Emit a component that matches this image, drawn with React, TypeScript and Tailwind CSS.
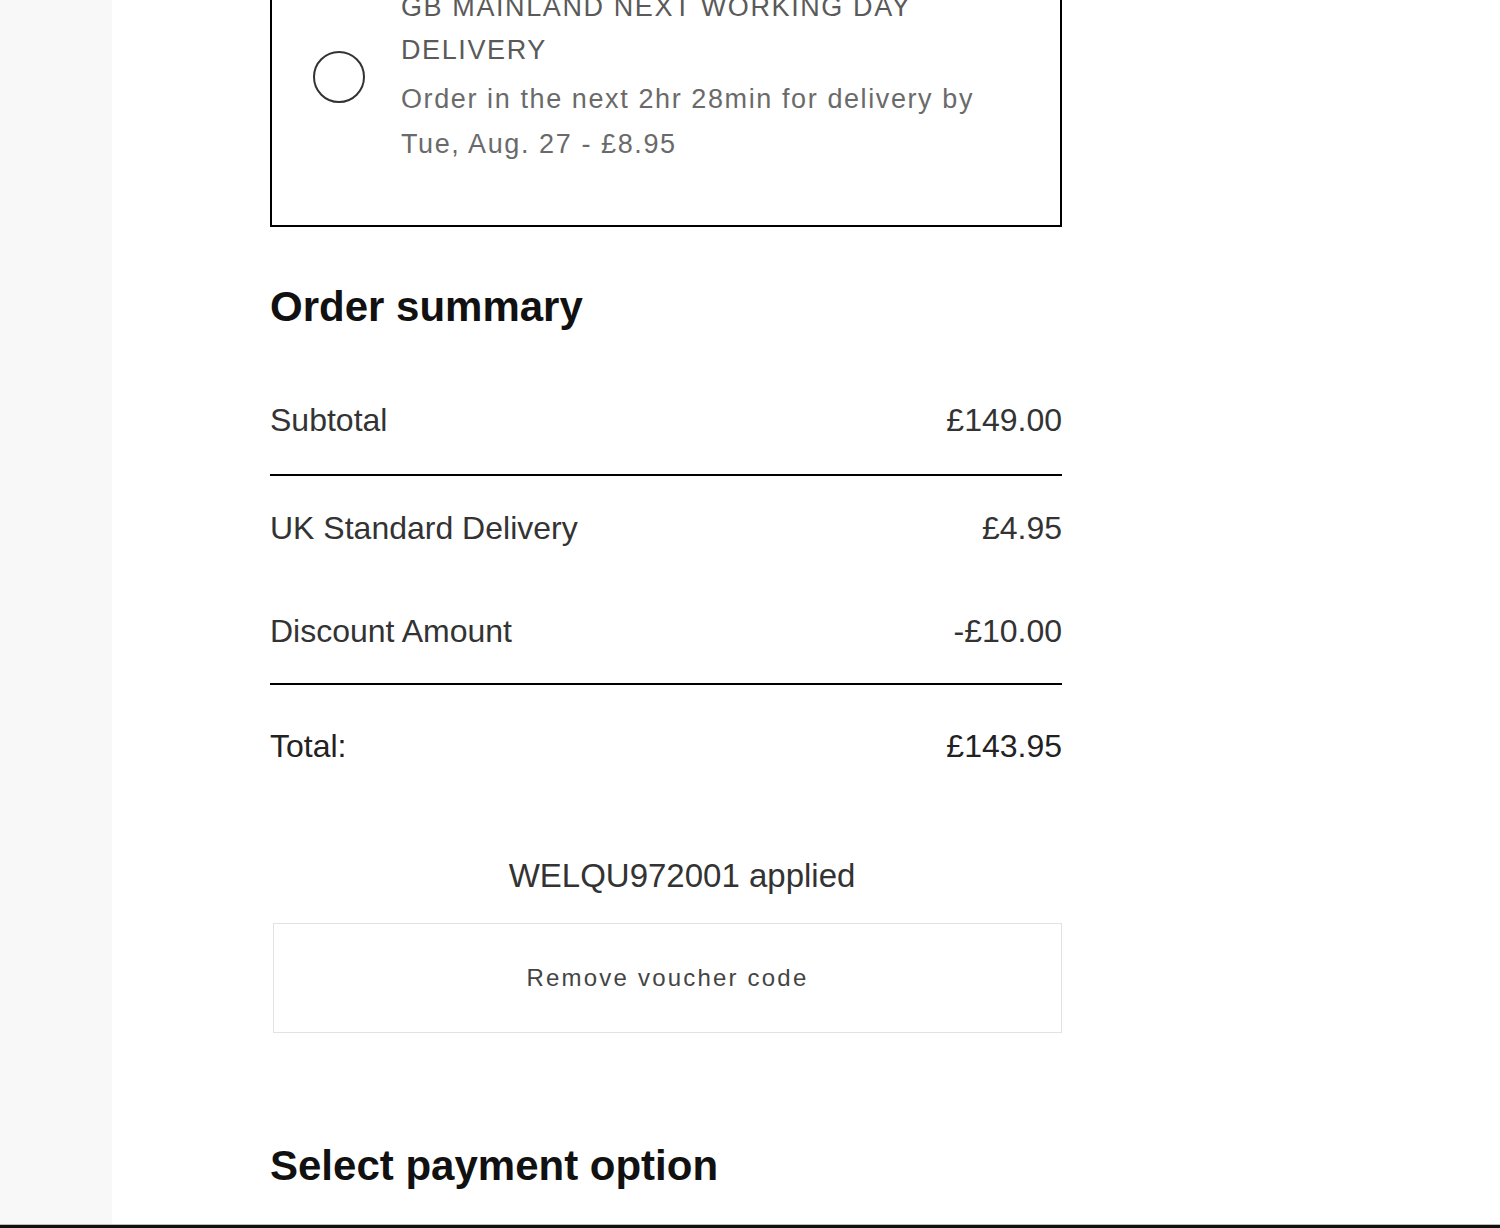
import React from 'react';

const rows = [
  { label: 'Subtotal', value: '£149.00', h: 'h-[111px]', line: true },
  { label: 'UK Standard Delivery', value: '£4.95', h: 'h-[103px]', line: false },
  { label: 'Discount Amount', value: '-£10.00', h: 'h-[106px]', line: true },
];

export default function App() {
  return (
    <div className="flex h-[1228px] flex-col overflow-hidden bg-white font-['Liberation_Sans',Arial,sans-serif]">
      <div className="flex min-h-0 flex-1">
        <aside className="w-[112px] shrink-0 bg-[#f8f8f8]" />
        <main className="flex-1 pl-[158px]">
          <div className="w-[792px]">
            {/* Delivery option card */}
            <div className="-mt-[72px] flex items-center gap-[36px] border-2 border-black pt-[56px] pb-[58px] pl-[41px] pr-[59px]">
              <span className="h-[52px] w-[52px] shrink-0 rounded-full border-2 border-[#333]" />
              <div className="flex-1 text-[27px] tracking-[1.6px]">
                <p className="uppercase leading-[43px] text-[#5a5a5a]">GB Mainland Next Working Day Delivery</p>
                <p className="mt-[5px] leading-[45px] text-[#6a6a6a]">
                  Order in the next 2hr 28min for delivery by Tue, Aug. 27 - £8.95
                </p>
              </div>
            </div>

            {/* Order summary */}
            <h2 className="mt-[55px] text-[42px] font-bold leading-[50px] text-[#111]">Order summary</h2>
            <div className="mt-[33px] text-[32px] text-[#333]">
              {rows.map((row) => (
                <div
                  key={row.label}
                  className={`flex items-center justify-between ${row.h} ${row.line ? 'border-b-2 border-black' : ''}`}
                >
                  <span>{row.label}</span>
                  <span>{row.value}</span>
                </div>
              ))}
              <div className="flex h-[122px] items-center justify-between text-[#222]">
                <span>Total:</span>
                <span>£143.95</span>
              </div>
            </div>

            <p className="mt-[49px] pl-[32px] text-center text-[33px] leading-[40px] text-[#333]">WELQU972001 applied</p>
            <button className="mt-[27px] ml-[3px] flex h-[110px] w-[789px] items-center justify-center border border-[#e2e2e2] bg-white text-[24px] tracking-[2.2px] text-[#444]">
              Remove voucher code
            </button>

            <h2 className="mt-[108px] text-[42px] font-bold leading-[50px] text-[#111]">Select payment option</h2>
          </div>
        </main>
      </div>
      <div className="h-px shrink-0 bg-[#bdbdbd]" />
      <div className="h-[3px] shrink-0 bg-[#111]" />
    </div>
  );
}
